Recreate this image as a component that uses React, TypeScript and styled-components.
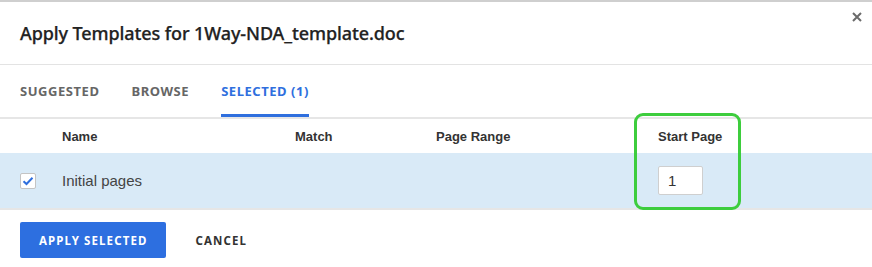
import React, { useState } from 'react';
import styled, { createGlobalStyle } from 'styled-components';

const GlobalStyle = createGlobalStyle`
  html, body {
    margin: 0;
    padding: 0;
    background: #fff;
  }
  body {
    font-family: "Noto Sans", "Open Sans", sans-serif;
    color: #333;
  }
`;

const Dialog = styled.div`
  position: relative;
  width: 872px;
  height: 267px;
  box-sizing: border-box;
  border-top: 2px solid #cfcfcf;
  background: #fff;
`;

const Header = styled.div`
  height: 63px;
  box-sizing: border-box;
  padding: 0 20px;
  display: flex;
  align-items: center;
  border-bottom: 1px solid #e3e3e3;
`;

const Title = styled.h2`
  margin: 0;
  font-size: 18px;
  font-weight: 500;
  color: #222;
  letter-spacing: -0.1px;
  -webkit-text-stroke: 0.25px #222;
`;

const CloseButton = styled.button`
  position: absolute;
  top: 6px;
  right: 6px;
  width: 18px;
  height: 18px;
  padding: 0;
  border: 0;
  background: none;
  display: flex;
  align-items: center;
  justify-content: center;
  cursor: pointer;
`;

const Tabs = styled.div`
  display: flex;
  gap: 32px;
  padding: 0 20px;
  height: 52px;
  border-bottom: 2px solid #e6e6e6;
`;

const Tab = styled.div<{ active?: boolean }>`
  display: flex;
  align-items: center;
  box-sizing: border-box;
  height: 52px;
  padding-top: 2px;
  font-size: 13px;
  font-weight: 700;
  letter-spacing: 0.55px;
  color: ${p => (p.active ? '#2f6fde' : '#666')};
  border-bottom: 3px solid ${p => (p.active ? '#2f6fde' : 'transparent')};
  margin-bottom: -1px;
  cursor: pointer;
`;

const Table = styled.div`
  position: relative;
  font-family: "Liberation Sans", Arial, sans-serif;
`;

const Row = styled.div<{ head?: boolean; selected?: boolean }>`
  display: grid;
  grid-template-columns: 62px 233px 141px 222px 1fr;
  align-items: center;
  height: ${p => (p.head ? '34px' : '55px')};
  background: ${p => (p.selected ? '#d9eaf7' : '#fff')};
  border-bottom: ${p => (p.head ? 'none' : '2px solid #e6e6e6')};
`;

const HeadCell = styled.div`
  font-size: 13px;
  font-weight: 700;
  color: #333;
`;

const Cell = styled.div`
  font-size: 15px;
  color: #444;
`;

const CheckCell = styled.div`
  padding-left: 20px;
  display: flex;
  align-items: center;
`;

const Checkbox = styled.span`
  width: 16px;
  height: 16px;
  box-sizing: border-box;
  border: 1px solid #c4c4c4;
  border-radius: 2px;
  background: #fff;
  display: flex;
  align-items: center;
  justify-content: center;
`;

const PageInput = styled.input`
  width: 45px;
  height: 29px;
  box-sizing: border-box;
  border: 1px solid #cfcfcf;
  border-radius: 2px;
  padding: 0 9px;
  font-family: "Liberation Sans", Arial, sans-serif;
  font-size: 15px;
  color: #333;
  background: #fff;
  outline: none;
`;

const Highlight = styled.div`
  position: absolute;
  left: 634px;
  top: -6px;
  width: 107px;
  height: 97px;
  box-sizing: border-box;
  border: 3px solid #3dcd3d;
  border-radius: 9px;
  pointer-events: none;
`;

const Footer = styled.div`
  display: flex;
  align-items: center;
  gap: 12px;
  padding: 12px 20px 0;
`;

const Button = styled.button<{ primary?: boolean }>`
  height: 36px;
  padding: 0 ${p => (p.primary ? '19px' : '17px')};
  border: 0;
  border-radius: 2px;
  font-family: "Noto Sans", "Open Sans", sans-serif;
  font-size: 11.5px;
  font-weight: 700;
  letter-spacing: 1.1px;
  color: ${p => (p.primary ? '#fff' : '#333')};
  background: ${p => (p.primary ? '#2d6fe0' : 'transparent')};
  cursor: pointer;
`;

export default function App() {
  const [startPage, setStartPage] = useState('1');

  return (
    <>
      <GlobalStyle />
      <Dialog>
        <Header>
          <Title>Apply Templates for 1Way-NDA_template.doc</Title>
        </Header>
        <CloseButton aria-label="Close">
          <svg width="10" height="10" viewBox="0 0 10 10">
            <path d="M1 1 L9 9 M9 1 L1 9" stroke="#6b6b6b" strokeWidth="2" />
          </svg>
        </CloseButton>
        <Tabs>
          <Tab>SUGGESTED</Tab>
          <Tab>BROWSE</Tab>
          <Tab active>SELECTED (1)</Tab>
        </Tabs>
        <Table>
          <Row head>
            <div />
            <HeadCell>Name</HeadCell>
            <HeadCell>Match</HeadCell>
            <HeadCell>Page Range</HeadCell>
            <HeadCell>Start Page</HeadCell>
          </Row>
          <Row selected>
            <CheckCell>
              <Checkbox>
                <svg width="12" height="10" viewBox="0 0 12 10">
                  <path d="M1.5 5.2 L4.5 8 L10.5 1.8" fill="none" stroke="#2f6fde" strokeWidth="2" />
                </svg>
              </Checkbox>
            </CheckCell>
            <Cell>Initial pages</Cell>
            <Cell />
            <Cell />
            <Cell>
              <PageInput value={startPage} onChange={e => setStartPage(e.target.value)} />
            </Cell>
          </Row>
          <Highlight />
        </Table>
        <Footer>
          <Button primary>APPLY SELECTED</Button>
          <Button>CANCEL</Button>
        </Footer>
      </Dialog>
    </>
  );
}
